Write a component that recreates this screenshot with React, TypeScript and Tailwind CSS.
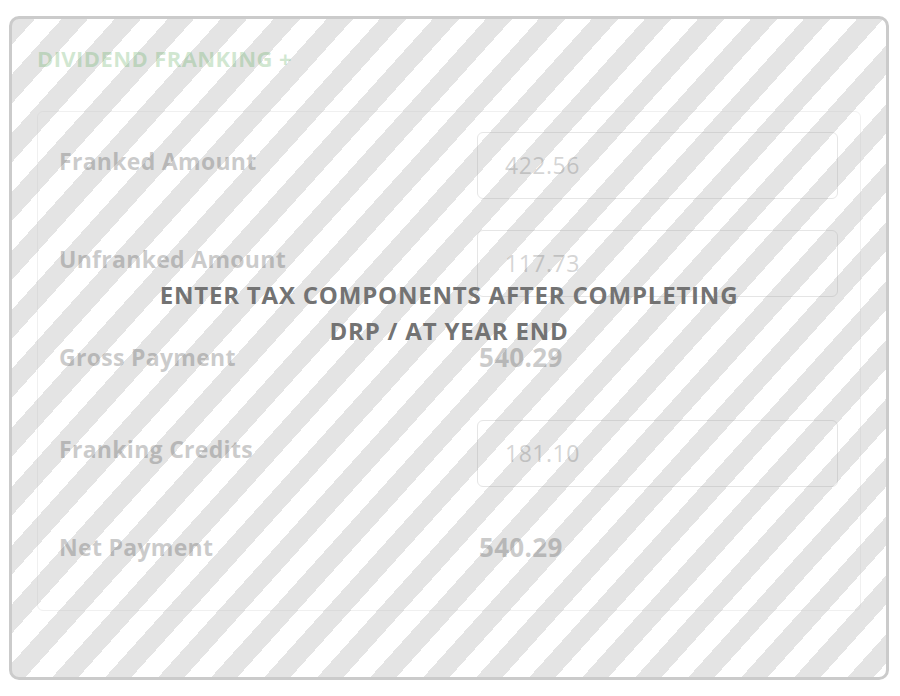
const rows = [
  { label: "Franked Amount", value: "422.56", input: true, gap: "mt-0" },
  { label: "Unfranked Amount", value: "117.73", input: true, gap: "mt-[32px]" },
  { label: "Gross Payment", value: "540.29", input: false, gap: "mt-[28px]" },
  { label: "Franking Credits", value: "181.10", input: true, gap: "mt-[30px]" },
  { label: "Net Payment", value: "540.29", input: false, gap: "mt-[28px]" },
];

export default function App() {
  return (
    <div className="w-[900px] h-[696px] bg-white pt-[16px] pl-[9px] font-['Open_Sans','Liberation_Sans',sans-serif]">
      <div className="relative w-[880px] h-[664px] rounded-[10px] border-[3px] border-[#cbcbcb] overflow-hidden bg-[repeating-linear-gradient(132deg,#e4e4e4_0px,#e4e4e4_17px,#ffffff_17px,#ffffff_36.9px,#e4e4e4_36.9px,#e4e4e4_39.4px)]">
        {/* disabled form underneath */}
        <div className="opacity-25 px-[25px] pt-[25px]">
          <h2 className="text-[22px] leading-[28px] font-bold uppercase tracking-[0.4px] text-[#4a9e48]">
            Dividend Franking +
          </h2>
          <div className="mt-[39px] h-[500px] rounded-[6px] border border-[#c4c4c4] pl-[21px] pr-[22px] pt-[20px] flex flex-col">
            {rows.map((r) => (
              <div key={r.label} className={`flex items-center h-[66px] ${r.gap}`}>
                <div
                  className={`flex-1 text-[23px] font-bold tracking-[0.3px] text-[#333] ${r.input ? "pb-[8px]" : "pb-0"}`}
                >
                  {r.label}
                </div>
                {r.input ? (
                  <div className="w-[361px] h-[67px] rounded-[6px] border border-[#9a9a9a] flex items-center pl-[27px] text-[23px] tracking-[0.5px] text-[#5a5a5a]">
                    {r.value}
                  </div>
                ) : (
                  <div className="w-[361px] pl-[2px] text-[26px] font-bold tracking-[0.3px] text-[#333]">{r.value}</div>
                )}
              </div>
            ))}
          </div>
        </div>
        <div className="absolute left-0 right-0 top-[258px] text-center text-[24px] leading-[36px] font-bold uppercase tracking-[0.8px] text-[#737373]">
          Enter tax components after completing
          <br />
          DRP / at year end
        </div>
      </div>
    </div>
  );
}
